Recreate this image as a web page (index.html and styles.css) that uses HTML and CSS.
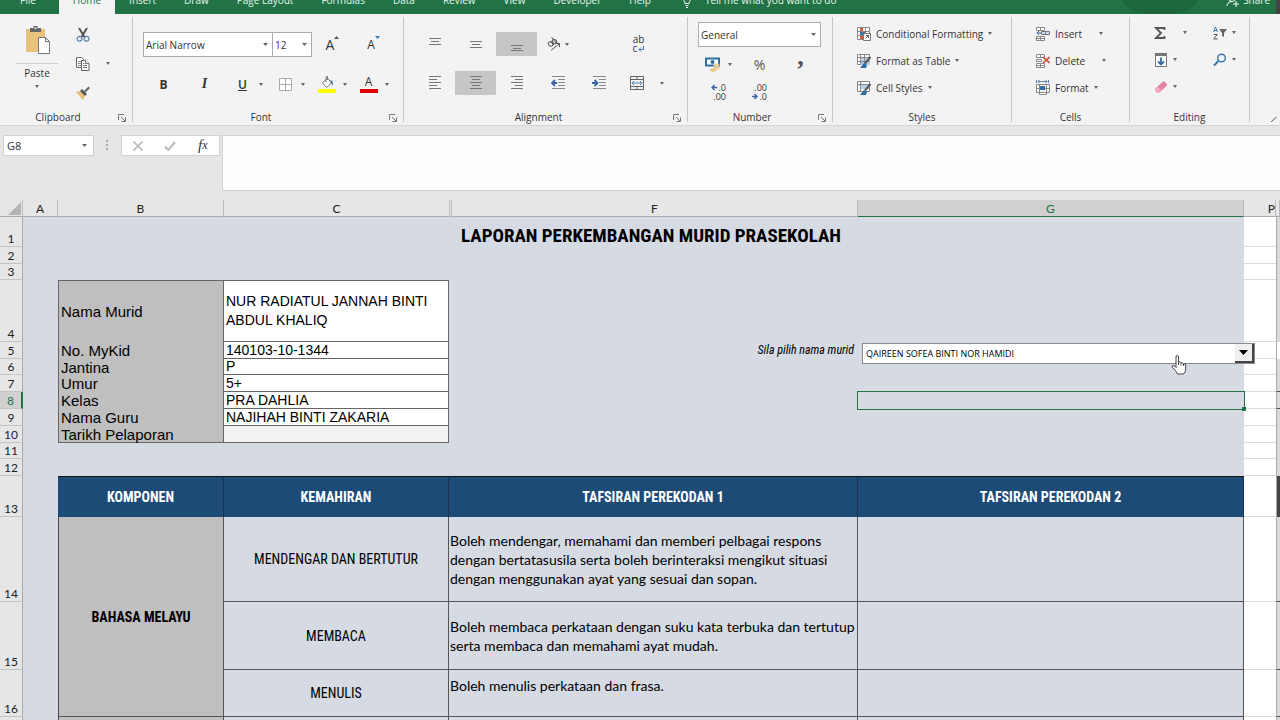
FILE: index.html
```html
<!DOCTYPE html>
<html lang="ms">
<head>
  <meta charset="UTF-8">
  <title>Laporan Perkembangan Murid Prasekolah</title>
  <meta name="viewport" content="width=device-width, initial-scale=1.0">
  <link rel="stylesheet" href="styles.css">
</head>
<body>
  <div class="app">
    <nav class="tabs">
      <a class="tab file" href="#file">File</a>
      <a class="tab active" href="#home">Home</a>
      <a class="tab" href="#insert">Insert</a>
      <a class="tab" href="#draw">Draw</a>
      <a class="tab" href="#layout">Page Layout</a>
      <a class="tab" href="#formulas">Formulas</a>
      <a class="tab" href="#data">Data</a>
      <a class="tab" href="#review">Review</a>
      <a class="tab" href="#view">View</a>
      <a class="tab" href="#developer">Developer</a>
      <a class="tab" href="#help">Help</a>
      <a class="tab tell" href="#tell">
        <svg width="12" height="16" viewBox="0 0 12 16" fill="none" stroke="#fff"><path d="M4 11.500C4 9 1.500 8 1.500 5a4.500 4.500 0 0 1 9 0c0 3-2.500 4-2.500 6.500zM4.500 13.500h3M5 15.500h2"/></svg>
        Tell me what you want to do
      </a>
      <span class="swirl"></span>
      <a class="tab share" href="#share">
        <svg width="13" height="14" viewBox="0 0 13 14" fill="none" stroke="#fff"><circle cx="6" cy="5" r="3.500"/><path d="M1 13c0-2.500 2-4.500 5-4.500M10 8v6M7 11h6"/></svg>
        Share
      </a>
    </nav>

    <div class="ribbon">
      <section class="group clipboard">
        <div class="tools">
          <button class="paste">
            <svg width="26" height="29" viewBox="0 0 26 29"><path d="M1 3h19v23H1z" fill="#e9c27d"/><path d="M5 2h3.500V0h4v2H16v4H5z" fill="#666"/><path d="M9.500 1.500h2v1.500h-2z" fill="#f3f3f3"/><path d="M13.500 11.500h7l4 4v12h-11z" fill="#fff" stroke="#777"/><path d="M20.500 11.500v4h4" fill="none" stroke="#777"/></svg>
            <span class="paste-name">Paste</span>
            <span class="caret"></span>
          </button>
          <div class="stack">
            <button aria-label="Cut"><svg width="14" height="14" viewBox="0 0 14 14" fill="none"><path d="M3 0l5.500 9M11 0L5.500 9" stroke="#555" stroke-width="2"/><circle cx="3.500" cy="10.800" r="2.400" stroke="#5b83ad" stroke-width="1.200"/><circle cx="10.500" cy="10.800" r="2.400" stroke="#5b83ad" stroke-width="1.200"/></svg></button>
            <button aria-label="Copy"><svg width="14" height="14" viewBox="0 0 14 14" fill="#fff" stroke="#666"><path d="M.5.500h5l3 3v7h-8z"/><path d="M2 4.500h3M2 6.500h3M2 8.500h3" stroke="#888"/><path d="M5.500 3.500h4l3.500 3v7H5.500z"/><path d="M9.500 3.500v3h3.500M7 8.500h4M7 10.500h4M7 6.500h1.500" stroke="#777"/></svg><span class="caret"></span></button>
            <button aria-label="Format painter"><svg width="14" height="14" viewBox="0 0 14 14"><path d="M0 6l4-1 5 5-2 4z" fill="#e9bd75"/><path d="M4 5l2-2 5 5-2 2z" fill="#555"/><path d="M8 5l4.500-4.500L14 2 9.500 6.500z" fill="#666"/></svg></button>
          </div>
        </div>
        <h2>Clipboard</h2>
        <button class="launch" aria-label="Clipboard options"><svg width="8" height="8" viewBox="0 0 8 8" fill="none" stroke="#777"><path d="M.5 6V.500H6M3 3l4 4M7.500 3.500v4h-4"/></svg></button>
      </section>

      <section class="group font">
        <div class="tools">
          <div class="row row-top">
            <select class="box font-name" aria-label="Font"><option>Arial Narrow</option></select>
            <select class="box font-size" aria-label="Font size"><option>12</option></select>
            <button aria-label="Increase font size"><span class="big-a">A</span><svg class="mark" width="5" height="12" viewBox="0 0 5 12"><path d="M0 3l2.500-3L5 3z" fill="#555"/></svg></button>
            <button aria-label="Decrease font size"><span class="small-a">A</span><svg class="mark" width="5" height="12" viewBox="0 0 5 12"><path d="M0 0h5L2.500 3z" fill="#3d76ad"/></svg></button>
          </div>
          <div class="row">
            <button class="bold">B</button>
            <button class="italic">I</button>
            <button class="split"><span class="glyph underline">U</span><span class="caret"></span></button>
            <button class="split" aria-label="Borders"><svg width="18" height="16" viewBox="0 0 18 16" fill="#fff" stroke="#aaa"><path d="M3.500 2.500h12v12h-12zM9.500 2.500v12M3.500 8.500h12"/></svg><span class="caret"></span></button>
            <button class="split" aria-label="Fill colour"><svg width="18" height="18" viewBox="0 0 18 18"><path d="M4.500 8l5-5 4 5-5 4.500z" fill="#fff" stroke="#777"/><path d="M8 7V2.500Q8 1 9.500 1.500V5" fill="none" stroke="#777"/><path d="M12.500 5q3.500 1 2 6-1-3-2-4z" fill="#3d76ad"/><path d="M0 14h18v4H0z" fill="#ffff00"/></svg><span class="caret"></span></button>
            <button class="split" aria-label="Font colour"><span class="glyph font-color">A</span><span class="caret"></span></button>
          </div>
        </div>
        <h2>Font</h2>
        <button class="launch" aria-label="Font options"><svg width="8" height="8" viewBox="0 0 8 8" fill="none" stroke="#777"><path d="M.5 6V.500H6M3 3l4 4M7.500 3.500v4h-4"/></svg></button>
      </section>

      <section class="group alignment">
        <div class="tools">
          <div class="row row-top">
            <button aria-label="Top align"><svg width="14" height="16" viewBox="0 0 14 16" stroke="#777"><path d="M1 2.500h12M3 5.500h8M1 8.500h12"/></svg></button>
            <button aria-label="Middle align"><svg width="14" height="16" viewBox="0 0 14 16" stroke="#777"><path d="M1 5.500h12M3 8.500h8M1 11.500h12"/></svg></button>
            <button class="on" aria-label="Bottom align"><svg width="14" height="16" viewBox="0 0 14 16" stroke="#777"><path d="M1 9.500h12M3 12.500h8M1 14.500h12"/></svg></button>
            <button class="orient" aria-label="Orientation"><svg width="14" height="14" viewBox="0 0 14 14" fill="none" stroke="#555"><ellipse cx="3.500" cy="7" rx="2.500" ry="1.800" transform="rotate(45 3.500 7)"/><path d="M3.500 4l3.500 4"/><ellipse cx="7.500" cy="4.500" rx="1.800" ry="2.500" transform="rotate(-45 7.500 4.500)"/><path d="M4.500 0l4.500 6M4 13.500l8-6.500M9 6.500h3.500V10"/></svg><span class="caret"></span></button>
            <button class="wrap" aria-label="Wrap text"><span>ab</span><span>c<svg width="6" height="6" viewBox="0 0 6 6" fill="none" stroke="#3d76ad"><path d="M5.500 0v3.500H1M3 1.500l-2 2 2 2"/></svg></span></button>
          </div>
          <div class="row">
            <button aria-label="Align left"><svg width="14" height="14" viewBox="0 0 14 14" stroke="#777"><path d="M1 .5h12M1 3.500h8M1 6.500h12M1 9.500h8M1 12.500h12"/></svg></button>
            <button class="on" aria-label="Centre"><svg width="14" height="14" viewBox="0 0 14 14" stroke="#777"><path d="M1 .5h12M3 3.500h8M1 6.500h12M3 9.500h8M1 12.500h12"/></svg></button>
            <button aria-label="Align right"><svg width="14" height="14" viewBox="0 0 14 14" stroke="#777"><path d="M1 .5h12M5 3.500h8M1 6.500h12M5 9.500h8M1 12.500h12"/></svg></button>
            <button aria-label="Decrease indent"><svg width="14" height="14" viewBox="0 0 14 14" stroke="#888"><path d="M1 .5h13M7 3.500h7M7 6.500h7M7 9.500h7M1 12.500h13"/><path d="M6 7H1.500M4 4L1 7l3 3" fill="none" stroke="#3465a4" stroke-width="1.800"/></svg></button>
            <button aria-label="Increase indent"><svg width="14" height="14" viewBox="0 0 14 14" stroke="#888"><path d="M1 .5h13M7 3.500h7M7 6.500h7M7 9.500h7M1 12.500h13"/><path d="M0 7h5M2.500 4l3 3-3 3" fill="none" stroke="#3465a4" stroke-width="1.800"/></svg></button>
            <button class="merge" aria-label="Merge and centre"><svg width="14" height="14" viewBox="0 0 14 14" fill="none" stroke="#666"><path d="M.5.500h13v13H.500zM.5 3.500h13M.5 10.500h13M7 .5v3M7 10.500v3"/><path d="M2.500 7h9M4 5L2 7l2 2M10 5l2 2-2 2" stroke="#5b83ad"/></svg><span class="caret"></span></button>
          </div>
        </div>
        <h2>Alignment</h2>
        <button class="launch" aria-label="Alignment options"><svg width="8" height="8" viewBox="0 0 8 8" fill="none" stroke="#777"><path d="M.5 6V.500H6M3 3l4 4M7.500 3.500v4h-4"/></svg></button>
      </section>

      <section class="group number">
        <div class="tools">
          <select class="box format" aria-label="Number format"><option>General</option></select>
          <div class="row">
            <button class="money" aria-label="Accounting format"><svg width="15" height="15" viewBox="0 0 15 15"><path d="M1 1.500h13v7H1z" fill="#fff" stroke="#2f6da3" stroke-width="2"/><circle cx="7.500" cy="5" r="2" fill="#2f6da3"/><ellipse cx="11.500" cy="8" rx="3" ry="1.700" fill="#efcf96"/><ellipse cx="11.500" cy="11" rx="3" ry="1.700" fill="#efcf96"/><ellipse cx="8" cy="13" rx="3" ry="1.700" fill="#e9c27d"/></svg><span class="caret"></span></button>
            <button class="percent">%</button>
            <button class="comma" aria-label="Comma style">,</button>
          </div>
          <div class="row">
            <button class="decimal" aria-label="Increase decimal"><span><svg width="6" height="7" viewBox="0 0 6 7" fill="none" stroke="#3465a4" stroke-width="1.400"><path d="M6 3.500H1M3.500 1L1 3.500 3.500 6"/></svg>.0</span><span>.00</span></button>
            <button class="decimal" aria-label="Decrease decimal"><span>.00</span><span><svg width="6" height="7" viewBox="0 0 6 7" fill="none" stroke="#3465a4" stroke-width="1.400"><path d="M0 3.500h5M2.500 1L5 3.500 2.500 6"/></svg>.0</span></button>
          </div>
        </div>
        <h2>Number</h2>
        <button class="launch" aria-label="Number options"><svg width="8" height="8" viewBox="0 0 8 8" fill="none" stroke="#777"><path d="M.5 6V.500H6M3 3l4 4M7.500 3.500v4h-4"/></svg></button>
      </section>

      <section class="group styles">
        <div class="tools list">
          <button><svg width="14" height="14" viewBox="0 0 14 14" fill="#fff" stroke="#888"><path d="M.5.500h12v12H.500zM.5 4.500h12M.5 8.500h12M8.500.500v12"/><path d="M3 1h3v3H3zM3 9h3v3H3z" fill="#d9583b" stroke="none"/><path d="M3 5h5v3H3z" fill="#3d76ad" stroke="none"/><path d="M6.500 6.500h7v7h-7z" stroke="#777"/><path d="M8.500 11.500l3-3M9 8.500h2.500v2.500" fill="none" stroke="#666"/></svg>Conditional Formatting<span class="caret"></span></button>
          <button><svg width="14" height="14" viewBox="0 0 14 14" fill="#fff" stroke="#888"><path d="M.5.500h12v10H.500z"/><path d="M4 4h9v7H4z" fill="#b8cfe4" stroke="none"/><path d="M.5 3.500h12M.5 7.500h12M3.500.500v10M7.500.500v10"/><path d="M13.500 3L8 9.500" stroke="#555" stroke-width="2"/><path d="M3 14l4-5 3 2-1 3z" fill="#2f6da3" stroke="none"/></svg>Format as Table<span class="caret"></span></button>
          <button><svg width="14" height="14" viewBox="0 0 14 14" fill="#fff" stroke="#888"><path d="M.5.500h12v10H.500zM.5 3.500h12M3.500.500v10"/><path d="M4 4h8v4H4z" fill="#b8cfe4" stroke="none"/><path d="M13.500 3L8 9.500" stroke="#555" stroke-width="2"/><path d="M3 14l4-5 3 2-1 3z" fill="#2f6da3" stroke="none"/></svg>Cell Styles<span class="caret"></span></button>
        </div>
        <h2>Styles</h2>
      </section>

      <section class="group cells">
        <div class="tools list">
          <button><svg width="14" height="14" viewBox="0 0 14 14" fill="#fff" stroke="#888"><path d="M.5.500h8v3h-8zM4.500.500v3M.5 9.500h8v4h-8zM4.500 9.500v4M.5 11.500h8"/><path d="M5.500 4.500h8v3h-8zM9.500 4.500v3" fill="#cfdfed" stroke="#777"/><path d="M5 6H1M3 4L1 6l2 2" fill="none" stroke="#3465a4"/></svg>Insert<span class="caret far"></span></button>
          <button><svg width="14" height="14" viewBox="0 0 14 14" fill="#fff" stroke="#888"><path d="M.5.500h8v3h-8zM4.500.500v3M.5 9.500h8v4h-8zM4.500 9.500v4M.5 11.500h8M.5 5.500h5v2h-5z"/><path d="M7 3l6.500 6M13.500 3L7 9" stroke="#cf4a31" stroke-width="1.600"/></svg>Delete<span class="caret far"></span></button>
          <button><svg width="14" height="15" viewBox="0 0 14 15" fill="#fff" stroke="#888"><path d="M2 1.500h9M3.500 0L2 1.500 3.500 3M9.500 0L11 1.500 9.500 3M.5 0v3M12.500 0v3" fill="none" stroke="#5b83ad"/><path d="M.5 4.500h13v8H.500zM3.500 4.500v10h7v-10M.5 8.500h13"/><path d="M4 6h5v4H4z" fill="#2f6da3" stroke="none"/></svg>Format<span class="caret"></span></button>
        </div>
        <h2>Cells</h2>
      </section>

      <section class="group editing">
        <div class="tools edit-grid">
          <button aria-label="AutoSum"><svg width="12" height="14" viewBox="0 0 12 14" fill="none" stroke="#555" stroke-width="1.800"><path d="M10.500 4V2H2l5 5-5 5h8.500v-2"/></svg><span class="caret sum"></span></button>
          <button aria-label="Sort and filter"><svg width="14" height="14" viewBox="0 0 14 14" fill="none"><path d="M.5 6L2.500 1l2 5M1.200 4.500h2.600" stroke="#3d76ad"/><path d="M.8 8.500h3.400L.8 13h3.700" stroke="#555"/><path d="M6 3h8l-3 4v4l-2-1V7z" fill="#666"/></svg><span class="caret"></span></button>
          <button aria-label="Fill"><svg width="14" height="14" viewBox="0 0 14 14" fill="#fff"><path d="M1.500.500h11v13h-11z" stroke="#777"/><path d="M1 0h12v3H1z" fill="#777"/><path d="M7 4.500v7M4 8.500l3 3 3-3" fill="none" stroke="#2f6da3" stroke-width="1.800"/></svg><span class="caret"></span></button>
          <button aria-label="Find"><svg width="14" height="14" viewBox="0 0 14 14" fill="none" stroke="#3d76ad"><circle cx="8.500" cy="5" r="3.800" stroke-width="1.400"/><path d="M5.500 8L1 12.500" stroke-width="2"/></svg><span class="caret"></span></button>
          <button aria-label="Clear"><svg width="14" height="14" viewBox="0 0 14 14"><path d="M1 9l8-7.500q1-.5 2 .5l2 2.500q.5 1-.5 1.500L6 12z" fill="#e582a0"/><path d="M1 9l2.500-2.500 4.500 4L5 13H3L1 11z" fill="#efa9bd"/></svg><span class="caret"></span></button>
        </div>
        <h2>Editing</h2>
      </section>
      <button class="pin" aria-label="Collapse ribbon"><svg width="6" height="6" viewBox="0 0 6 6" stroke="#555"><path d="M0 6l5.500-5"/></svg></button>
    </div>

    <div class="formula-bar">
      <select class="name-box" aria-label="Name box"><option>G8</option></select>
      <svg class="grip" width="3" height="11" viewBox="0 0 3 11" fill="#aaa"><path d="M0 0h2v2H0zM0 4h2v2H0zM0 8h2v2H0z"/></svg>
      <div class="fx-box">
        <button aria-label="Cancel"><svg width="10" height="10" viewBox="0 0 10 10" stroke="#bbb" stroke-width="1.600"><path d="M.5.500l9 9M9.500.500l-9 9"/></svg></button>
        <button aria-label="Enter"><svg width="12" height="10" viewBox="0 0 12 10" fill="none" stroke="#bbb" stroke-width="2"><path d="M1 5.500L4.500 9 11 1"/></svg></button>
        <button class="fx"><span class="f">f</span>x</button>
      </div>
      <textarea class="formula" aria-label="Formula"></textarea>
    </div>

    <main class="sheet">
      <table>
        <colgroup>
          <col class="c-num"><col class="c-a"><col class="c-b"><col class="c-c"><col><col class="c-g"><col class="c-p"><col class="c-edge">
        </colgroup>
        <thead>
          <tr>
            <th class="corner"><svg width="13" height="13" viewBox="0 0 13 13"><path d="M13 0v13H0z" fill="#b4b4b4"/></svg></th>
            <th>A</th><th>B</th><th class="h-c">C</th><th class="h-f">F</th><th class="current">G</th><th class="h-p">P</th><th></th>
          </tr>
        </thead>
        <tbody>
          <tr class="r-title"><th>1</th><td></td><td class="title" colspan="4">LAPORAN PERKEMBANGAN MURID PRASEKOLAH</td><td class="blank"></td><td class="edge"></td></tr>
          <tr><th>2</th><td></td><td></td><td></td><td></td><td></td><td class="blank"></td><td class="edge"></td></tr>
          <tr class="slim"><th>3</th><td></td><td></td><td></td><td></td><td></td><td class="blank"></td><td class="edge"></td></tr>
          <tr class="r-name"><th>4</th><td></td><td class="label first">Nama Murid</td><td class="value first">NUR RADIATUL JANNAH BINTI ABDUL KHALIQ</td><td></td><td></td><td class="blank"></td><td class="edge"></td></tr>
          <tr><th>5</th><td></td><td class="label">No. MyKid</td><td class="value">140103-10-1344</td>
            <td class="hint"><label for="murid">Sila pilih nama murid</label></td>
            <td class="pick-cell">
              <div class="picker">
                <select id="murid"><option>QAIREEN SOFEA BINTI NOR HAMIDI</option></select>
                <span class="drop"><svg width="9" height="5" viewBox="0 0 9 5"><path d="M0 0h9L4.500 5z"/></svg></span>
                <svg class="hand" width="16" height="20" viewBox="0 0 16 20" fill="#fff" stroke="#444"><path d="M5 11V2q0-1.500 1.200-1.500T7.500 2v5q2-.8 2.500.800 2-.6 2.500 1 2-.3 2.200 1.200v4q0 3-2.200 5H6.500q-1.500-3.500-5-6.500-1-2 .5-2T5 12.500z"/><path d="M7.500 7v3M10 8v2.500M12.500 9v2" fill="none"/></svg>
              </div>
            </td>
            <td class="blank"></td><td class="edge light"></td></tr>
          <tr class="slim"><th>6</th><td></td><td class="label">Jantina</td><td class="value">P</td><td></td><td></td><td class="blank"></td><td class="edge"></td></tr>
          <tr><th>7</th><td></td><td class="label">Umur</td><td class="value">5+</td><td></td><td></td><td class="blank"></td><td class="edge ruled"></td></tr>
          <tr><th class="current">8</th><td></td><td class="label">Kelas</td><td class="value">PRA DAHLIA</td><td></td><td class="selected"></td><td class="blank"></td><td class="edge ruled"></td></tr>
          <tr><th>9</th><td></td><td class="label">Nama Guru</td><td class="value">NAJIHAH BINTI ZAKARIA</td><td></td><td></td><td class="blank"></td><td class="edge"></td></tr>
          <tr><th>10</th><td></td><td class="label last">Tarikh Pelaporan</td><td class="value empty"></td><td></td><td></td><td class="blank"></td><td class="edge"></td></tr>
          <tr class="slim"><th>11</th><td></td><td></td><td></td><td></td><td></td><td class="blank"></td><td class="edge"></td></tr>
          <tr><th>12</th><td></td><td></td><td></td><td></td><td></td><td class="blank"></td><td class="edge"></td></tr>
          <tr class="r-head"><th>13</th><td></td><td class="head">KOMPONEN</td><td class="head">KEMAHIRAN</td><td class="head">TAFSIRAN PEREKODAN 1</td><td class="head">TAFSIRAN PEREKODAN 2</td><td class="blank"></td><td class="edge dark"></td></tr>
          <tr class="r-14"><th>14</th><td></td><td class="subject" rowspan="3">BAHASA MELAYU</td><td class="skill">MENDENGAR DAN BERTUTUR</td><td class="note">Boleh mendengar, memahami dan memberi pelbagai respons dengan bertatasusila serta boleh berinteraksi mengikut situasi dengan menggunakan ayat yang sesuai dan sopan.</td><td class="note"></td><td class="blank"></td><td class="edge ruled"></td></tr>
          <tr class="r-15"><th>15</th><td></td><td class="skill">MEMBACA</td><td class="note">Boleh membaca perkataan dengan suku kata terbuka dan tertutup serta membaca dan memahami ayat mudah.</td><td class="note"></td><td class="blank"></td><td class="edge ruled"></td></tr>
          <tr class="r-16"><th>16</th><td></td><td class="skill">MENULIS</td><td class="note top">Boleh menulis perkataan dan frasa.</td><td class="note"></td><td class="blank"></td><td class="edge ruled"></td></tr>
          <tr><th></th><td></td><td class="subject"></td><td class="skill"></td><td class="note"></td><td class="note"></td><td class="blank"></td><td class="edge"></td></tr>
        </tbody>
      </table>
    </main>
  </div>
</body>
</html>
```
FILE: styles.css
```css
* {
  box-sizing: border-box;
}
body {
  margin: 0;
  font-family: "Open Sans", "Noto Sans", sans-serif;
  font-size: 10px;
  color: #333;
  background: #e6e6e6;
}
button {
  display: flex;
  align-items: center;
  justify-content: center;
  margin: 0;
  padding: 0;
  border: 0;
  background: none;
  font: inherit;
  color: inherit;
}
select,
textarea {
  appearance: none;
  border-radius: 0;
  margin: 0;
  font: inherit;
  color: inherit;
}
svg {
  flex: none;
}
.app {
  display: flex;
  flex-direction: column;
  height: 100vh;
  overflow: hidden;
}

/* ribbon tabs */
.tabs {
  display: flex;
  align-items: flex-end;
  flex: none;
  height: 14px;
  padding-left: 6px;
  overflow: hidden;
  background: #217346;
  border-right: 4px solid #444;
}
.tab {
  display: flex;
  align-items: center;
  gap: 12px;
  height: 28px;
  padding: 0 14px;
  line-height: 28px;
  color: #e8f3ec;
  text-decoration: none;
  white-space: nowrap;
}
.tab.file {
  padding-right: 23px;
}
.tab.active {
  background: #f3f3f3;
  color: #217346;
}
.tell {
  margin-left: 2px;
}
.swirl {
  width: 84px;
  height: 28px;
  margin-left: auto;
  border-radius: 0 0 42px 42px;
  background: #1d673e;
}
.share {
  gap: 4px;
  margin-left: 10px;
  padding-right: 6px;
}

/* ribbon groups */
.ribbon {
  display: flex;
  flex: none;
  height: 111px;
  background: #f3f3f3;
  position: relative;
}
.group {
  position: relative;
  display: flex;
  flex-direction: column;
  justify-content: space-between;
  margin: 3px 0;
  border-right: 1px solid #c6c6c6;
}
.group h2 {
  margin: 0;
  font-size: 10px;
  font-weight: normal;
  line-height: 9px;
  text-align: center;
}
.clipboard { width: 133px; }
.font { width: 271px; }
.alignment { width: 284px; }
.number { width: 145px; }
.styles { width: 179px; }
.cells { width: 118px; }
.editing { width: 120px; }
.clipboard h2,
.number h2 {
  padding-right: 16px;
}
.font h2,
.alignment h2 {
  padding-right: 14px;
}
.launch {
  position: absolute;
  right: 6px;
  bottom: 0;
}
.pin {
  position: absolute;
  right: 3px;
  bottom: 3px;
}
.caret {
  flex: none;
  border: 2px solid transparent;
  border-top: 3px solid #666;
  border-bottom: 0;
}
.row {
  display: flex;
}
.row button {
  width: 41px;
  height: 24px;
}
.row-top {
  margin-bottom: 15px;
}
button.on {
  background: #c6c6c6;
}

.clipboard .tools {
  display: flex;
  align-items: flex-start;
  gap: 18px;
  padding: 3px 0 0 16px;
}
.paste {
  flex-direction: column;
  width: 42px;
  padding-top: 6px;
}
.paste svg {
  margin-left: 2px;
}
.paste-name {
  width: 100%;
  margin: 8px 0 5px;
  padding-top: 2px;
  border-top: 1px solid #ccc;
}
.stack {
  display: grid;
  grid-auto-rows: 29px;
}
.stack button {
  justify-content: flex-start;
  gap: 16px;
}

.font .tools,
.alignment .tools {
  padding: 15px 0 0 10px;
}
.box {
  height: 25px;
  padding: 0 2px;
  border: 1px solid #ababab;
  background: #fff url("data:image/svg+xml,%3Csvg xmlns='http://www.w3.org/2000/svg' width='5' height='3'%3E%3Cpath d='M0 0h5L2.500 3z' fill='%23666'/%3E%3C/svg%3E") no-repeat right 4px center;
}
.font-name { width: 130px; }
.font-size { width: 39px; border-left: 0; }
.big-a { font-size: 14px; }
.small-a { font-size: 12px; }
.mark { margin-bottom: 4px; }
.bold {
  font-weight: bold;
  font-size: 12px;
}
.italic {
  font-family: "Liberation Serif", serif;
  font-style: italic;
  font-weight: bold;
  font-size: 14px;
}
.row .split {
  width: 42px;
  gap: 7px;
}
.row .split:nth-child(3) {
  margin-left: 2px;
}
.glyph {
  width: 18px;
  font-size: 12px;
}
.underline {
  font-weight: 600;
  text-decoration: underline;
}
.font-color {
  line-height: 14px;
  border-bottom: 4px solid #e00000;
}
.orient {
  gap: 4px;
}
.row .wrap {
  flex-direction: column;
  margin-left: 40px;
  line-height: 9px;
}
.wrap span {
  display: flex;
  align-items: center;
  gap: 1px;
}
.row .merge {
  width: 56px;
  gap: 16px;
}

.number .tools {
  padding: 5px 0 0 10px;
}
.format {
  width: 123px;
  margin-bottom: 3px;
}
.number .row button {
  height: 28px;
}
.money {
  gap: 8px;
}
.percent {
  font-size: 14px;
  color: #555;
}
.comma {
  font: bold 26px/10px "Liberation Serif", serif;
  color: #555;
}
.row .comma {
  padding-bottom: 14px;
}
.row .decimal {
  flex-direction: column;
  align-items: flex-end;
  padding-right: 13px;
  font-size: 9px;
  line-height: 9px;
}
.decimal span {
  display: flex;
  align-items: center;
  gap: 1px;
}

.list {
  display: grid;
  grid-auto-rows: 27px;
  justify-items: start;
  padding: 3px 0 0 24px;
}
.list button {
  gap: 5px;
}
.list .far {
  margin-left: 12px;
}
.edit-grid {
  display: grid;
  grid-template-columns: 59px 60px;
  grid-auto-rows: 27px;
  padding: 2px 0 0 24px;
}
.edit-grid button {
  justify-content: flex-start;
  gap: 5px;
}
.edit-grid .sum {
  margin-left: 12px;
}

/* formula bar */
.formula-bar {
  display: flex;
  align-items: flex-start;
  flex: none;
  height: 75px;
  padding: 9px 0 0 3px;
  border-top: 1px solid #d5d5d5;
}
.name-box {
  width: 91px;
  height: 21px;
  padding: 0 3px;
  border: 1px solid #d0d0d0;
  background: #fff url("data:image/svg+xml,%3Csvg xmlns='http://www.w3.org/2000/svg' width='5' height='3'%3E%3Cpath d='M0 0h5L2.500 3z' fill='%23666'/%3E%3C/svg%3E") no-repeat right 6px center;
  font-size: 11px;
}
.grip {
  margin: 5px 12px 0 12px;
}
.fx-box {
  display: flex;
  width: 99px;
  height: 21px;
  border: 1px solid #d0d0d0;
  background: #fff;
}
.fx-box button {
  flex: 1;
}
.fx-box .fx {
  font: italic 12px "Liberation Serif", serif;
}
.f {
  font-size: 15px;
}
.formula {
  flex: 1;
  height: 56px;
  margin-left: 2px;
  border: 1px solid #d0d0d0;
  border-right: 0;
  background: #fdfdfd;
  resize: none;
}

/* worksheet */
.sheet {
  flex: 1;
  overflow: hidden;
}
table {
  width: 100%;
  table-layout: fixed;
  border-collapse: separate;
  border-spacing: 0;
  color: #000;
}
.c-num { width: 23px; }
.c-a { width: 35px; }
.c-b { width: 166px; }
.c-c { width: 225px; }
.c-g { width: 386px; }
.c-p { width: 32px; }
.c-edge { width: 4px; }
tr {
  height: 17px;
}
tr.slim { height: 16px; }
tr.r-title { height: 30px; }
tr.r-name { height: 62px; }
tr.r-head { height: 41px; }
tr.r-14 { height: 85px; }
tr.r-15 { height: 68px; }
tr.r-16 { height: 47px; }
th,
td {
  padding: 0;
}
th {
  font-family: Lato, sans-serif;
  font-size: 12px;
  line-height: 15px;
  font-weight: normal;
  color: #222;
  background: #e6e6e6;
}
thead th {
  border-right: 1px solid #bbb;
  border-bottom: 1px solid #aaa;
}
.corner svg {
  display: block;
  margin-left: 8px;
}
thead .h-c {
  border-right: 0;
}
.h-f {
  border-left: 3px double #bbb;
}
thead .h-p {
  text-align: right;
}
thead .current {
  background: #d0d0d0;
  border-bottom: 1px solid #217346;
  color: #217346;
}
tbody th {
  vertical-align: bottom;
  border-right: 1px solid #aaa;
  border-bottom: 1px solid #c4c4c4;
}
tbody .current {
  background: #d0d0d0;
  border-right: 2px solid #217346;
  color: #217346;
}
td {
  background: #d6dae3;
}
td.blank {
  background: #fff;
  border-bottom: 1px solid #dcdcdc;
}
td.edge {
  background: #dadada;
  border-left: 1px solid #aaa;
}
td.light { background: #fff; }
td.ruled { border-bottom: 1px solid #555; }
td.dark { background: #444; }
.title {
  font: bold 19px "Roboto Condensed", Roboto, sans-serif;
  text-align: center;
  padding-top: 6px;
}
.label,
.value {
  padding-left: 2px;
  font-family: "Liberation Sans", Arial, sans-serif;
  font-size: 15px;
  line-height: 15px;
}
.label {
  background: #bfbfbf;
  border-left: 1px solid #666;
  border-right: 1px solid #666;
}
.value {
  font-size: 14px;
  background: #fff;
  border-right: 1px solid #666;
  border-bottom: 1px solid #666;
}
.first {
  border-top: 1px solid #666;
  line-height: 19px;
}
.last {
  border-bottom: 1px solid #666;
}
.empty {
  background: #f2f2f2;
}
.hint {
  padding-right: 4px;
  text-align: right;
  font: italic 12px/15px "Roboto Condensed", Roboto, sans-serif;
}
.pick-cell,
.selected {
  position: relative;
}
.picker {
  position: absolute;
  top: 1px;
  left: 4px;
  right: -11px;
  z-index: 1;
  display: flex;
  height: 21px;
  border: 1px solid #888;
  background: #fff;
}
.picker select {
  flex: 1;
  padding: 0 3px;
  border: 0;
  background: none;
  font-size: 9px;
}
.drop {
  display: flex;
  align-items: center;
  justify-content: center;
  width: 19px;
  background: #f0f0f0;
  border-right: 2px solid #444;
  border-bottom: 2px solid #444;
  pointer-events: none;
}
.hand {
  position: absolute;
  right: 67px;
  top: 11px;
}
.selected::before {
  content: "";
  position: absolute;
  inset: -1px;
  border: 1px solid #217346;
}
.selected::after {
  content: "";
  position: absolute;
  right: -2px;
  bottom: -2px;
  width: 4px;
  height: 4px;
  background: #217346;
}
.head,
.subject,
.skill {
  font: 14px "Roboto Condensed", Roboto, sans-serif;
  text-align: center;
}
.head {
  font-weight: bold;
  color: #fff;
  background: #1d4b77;
  border-top: 1px solid #111;
  border-right: 1px solid #16324f;
}
.subject {
  font-weight: bold;
  background: #bfbfbf;
  border-left: 1px solid #444;
}
.subject,
.skill,
.note {
  border-right: 1px solid #555;
  border-bottom: 1px solid #555;
}
.note {
  padding-left: 1px;
  font: 14px/19px Lato, sans-serif;
}
.top {
  vertical-align: top;
  padding-top: 6px;
}
```
